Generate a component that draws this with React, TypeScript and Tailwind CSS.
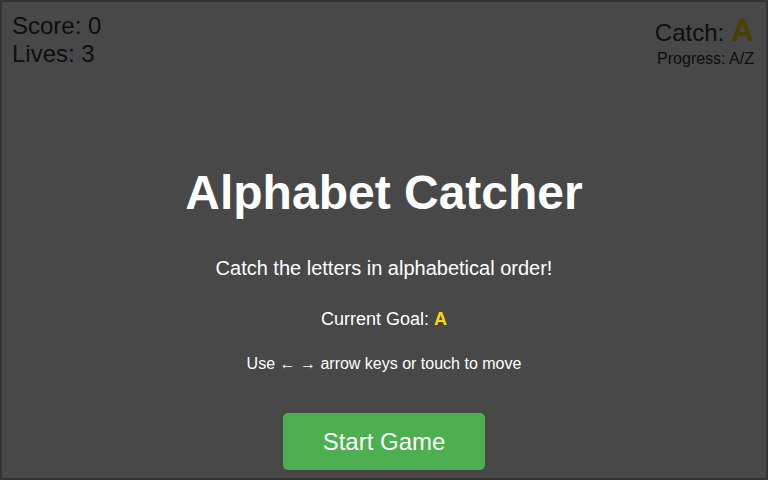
import React from "react";

export default function App() {
  return (
    <div className="h-[480px] w-[768px] bg-[#222] font-['Liberation_Sans',Arial,sans-serif]">
      <div className="relative h-full w-full overflow-hidden border-2 border-[#333] bg-[#f0f0f0]">
        {/* HUD */}
        <div className="flex items-start justify-between pl-[10px] pr-[12px] pt-[10px] text-[#333]">
          <div className="text-[24px] leading-[28px]">
            <div>Score: 0</div>
            <div>Lives: 3</div>
          </div>
          <div className="text-right">
            <div className="text-[24px] leading-[36px]">
              Catch:{" "}
              <span className="text-[32px] font-bold text-[#ffd700]">A</span>
            </div>
            <div className="text-[16px] leading-[16px]">Progress: A/Z</div>
          </div>
        </div>

        {/* Start overlay */}
        <div className="absolute inset-0 flex flex-col items-center bg-black/70 pt-[163px] text-white">
          <h1 className="text-[48px] font-bold leading-[55px]">Alphabet Catcher</h1>
          <p className="mt-[37px] text-[20px] leading-[23px]">
            Catch the letters in alphabetical order!
          </p>
          <p className="mt-[29px] text-[18px] leading-[21px]">
            Current Goal: <span className="font-bold text-[#ffd700]">A</span>
          </p>
          <p className="mt-[25px] text-[16px] leading-[18px]">
            Use ← → arrow keys or touch to move
          </p>
          <button className="mt-[40px] h-[57px] w-[202px] rounded-[5px] bg-[#4caf50] text-[24px] text-white">
            Start Game
          </button>
        </div>
      </div>
    </div>
  );
}
